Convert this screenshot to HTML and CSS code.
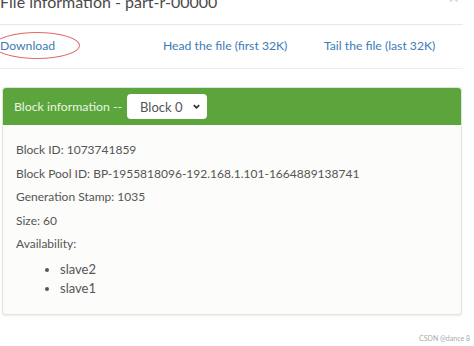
FILE: index.html
```html
<!DOCTYPE html>
<html lang="en">
<head>
    <meta charset="UTF-8">
    <title>File information</title>
    <link rel="stylesheet" href="styles.css">
</head>
<body>
    <div class="modal">
        <div class="modal-header">
            <h4>File information - part-r-00000</h4>
            <span class="close">&times;</span>
        </div>

        <div class="file-links">
            <a href="#" class="download">Download</a>
            <a href="#" class="head-link">Head the file (first 32K)</a>
            <a href="#">Tail the file (last 32K)</a>
        </div>

        <div class="panel">
            <div class="panel-heading">
                <span>Block information --</span>
                <div class="block-select">
                    <span>Block 0</span>
                    <svg viewBox="0 0 10 10"><path d="M2 3.5l3 3l3-3"></path></svg>
                </div>
            </div>
            <div class="panel-body">
                <p>Block ID: 1073741859</p>
                <p>Block Pool ID: BP-1955818096-192.168.1.101-1664889138741</p>
                <p>Generation Stamp: 1035</p>
                <p>Size: 60</p>
                <p>Availability:</p>
                <ul>
                    <li>slave2</li>
                    <li>slave1</li>
                </ul>
            </div>
        </div>
    </div>
    <div class="watermark">CSDN @dance 8</div>
</body>
</html>
```

FILE: styles.css
```css
* {
    margin: 0;
    padding: 0;
    box-sizing: border-box;
}

body {
    font-family: Lato, "Open Sans", sans-serif;
    font-size: 12px;
    color: #444;
    background: #fff;
    width: 474px;
    height: 346px;
    overflow: hidden;
}

.modal {
    width: 463px;
}

.modal-header {
    display: flex;
    justify-content: space-between;
    height: 25px;
    border-bottom: 1px solid #e8e8e8;
}

.modal-header h4 {
    margin-top: -9px;
    font-size: 16px;
    font-weight: 400;
    color: #4a4a4a;
    line-height: 22px;
}

.close {
    margin-top: -12px;
    margin-right: 4px;
    font-size: 18px;
    line-height: 18px;
    color: #ccc;
}

.file-links {
    display: flex;
    align-items: center;
    height: 44px;
    padding-bottom: 2px;
    border-bottom: 1px solid #eee;
}

.file-links a {
    color: #3c7cb8;
    text-decoration: none;
    font-size: 12.2px;
}

.file-links a.download {
    position: relative;
    width: 163px;
}

.download::after {
    content: "";
    position: absolute;
    left: -6px;
    top: -6px;
    width: 84px;
    height: 25px;
    border: 1px solid #e26a6a;
    border-radius: 50%;
}

.head-link {
    width: 161px;
}

.panel {
    margin: 18px 0 0 2px;
    width: 460px;
    border: 1px solid #dfe8d8;
    border-radius: 3px;
    background: #fcfcfa;
    box-shadow: 0 1px 2px rgba(0, 0, 0, 0.08);
}

.panel-heading {
    display: flex;
    align-items: center;
    height: 37px;
    padding: 0 11px;
    background: #5ba53c;
    color: #eaf6e2;
    font-size: 12.3px;
    border-radius: 3px 3px 0 0;
}

.block-select {
    display: flex;
    align-items: center;
    justify-content: space-between;
    margin-left: 5px;
    width: 80px;
    height: 25px;
    padding: 0 6px 0 13px;
    background: #fff;
    border-radius: 4px;
    color: #555;
    font-size: 13px;
}

.block-select svg {
    width: 9px;
    height: 9px;
    stroke: #333;
    stroke-width: 2;
    fill: none;
}

.panel-body {
    padding: 17px 13px 16px;
    color: #555;
    font-size: 12px;
}

.panel-body p {
    line-height: 16px;
    margin-bottom: 7.5px;
}

.panel-body ul {
    margin-top: 8px;
    padding-left: 44px;
    line-height: 19px;
    font-size: 13px;
}

.watermark {
    position: absolute;
    right: 4px;
    bottom: 4px;
    font-size: 7px;
    color: #aaa;
}
```
